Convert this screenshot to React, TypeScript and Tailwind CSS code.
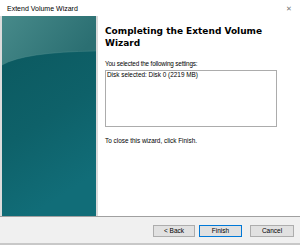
import React from "react";

function TealPanel() {
  return (
    <div className="w-[94px] h-full shrink-0">
      <svg width="94" height="200" viewBox="0 0 94 200" className="block">
        <defs>
          <linearGradient id="dark" x1="0" y1="0" x2="0.3" y2="1">
            <stop offset="0" stopColor="#0b575d" />
            <stop offset="0.6" stopColor="#0e6169" />
            <stop offset="1" stopColor="#116d78" />
          </linearGradient>
          <linearGradient id="light" x1="0" y1="0" x2="1" y2="0.4">
            <stop offset="0" stopColor="#478a8a" />
            <stop offset="1" stopColor="#2b6f72" />
          </linearGradient>
        </defs>
        <rect x="0" y="0" width="94" height="200" fill="url(#dark)" />
        <path d="M0 49 Q 22 36 94 35 V0 H0 Z" fill="url(#light)" />
        <path d="M0 49 Q 22 36 94 35" stroke="#5a9696" strokeOpacity="0.35" strokeWidth="1" fill="none" />
      </svg>
    </div>
  );
}

function Btn({ label, primary, w }: { label: string; primary?: boolean; w: string }) {
  return (
    <div
      className={
        "h-[12px] flex items-center justify-center bg-[#e1e1e1] text-[6.5px] text-black border " +
        (primary ? "border-[#0078d7] " : "border-[#adadad] ") +
        w
      }
    >
      {label}
    </div>
  );
}

export default function App() {
  return (
    <div
      className="w-[300px] h-[245px] bg-white flex flex-col overflow-hidden text-black"
      style={{ fontFamily: '"Liberation Sans", Arial, sans-serif' }}
    >
      <div className="h-[16px] flex items-center justify-between pl-[7px] pr-[8px] shrink-0">
        <span className="text-[7px] leading-none">Extend Volume Wizard</span>
        <span className="text-[7px] leading-none text-[#777]">✕</span>
      </div>
      <div className="h-[200px] flex shrink-0">
        <div className="w-[2px] h-full bg-[#dcdcdc] shrink-0" />
        <TealPanel />
        <div className="w-[2px] h-full bg-[#dadada] shrink-0" />
        <div className="flex-1 pl-[7px] flex flex-col">
          <div
            className="mt-[8.5px] text-[9px] leading-[12px] font-bold"
            style={{ fontFamily: '"DejaVu Sans", Verdana, sans-serif' }}
          >
            Completing the Extend Volume
            <br />
            Wizard
          </div>
          <div className="mt-[11.5px] text-[6.3px] leading-[8px] tracking-[-0.15px]">
            You selected the following settings:
          </div>
          <div className="mt-[2px] w-[172px] h-[57px] border border-[#acacac] pl-[1px] text-[6.4px] leading-[8px]">
            Disk selected: Disk 0 (2219 MB)
          </div>
          <div className="mt-[10px] text-[6.4px] leading-[8px]">To close this wizard, click Finish.</div>
        </div>
      </div>
      <div className="h-[1px] bg-[#a0a0a0] shrink-0" />
      <div className="h-[26px] bg-[#f0f0f0] flex items-start justify-end pt-[8px] pr-[6px] shrink-0">
        <Btn label="< Back" w="w-[42px]" />
        <div className="w-[4px]" />
        <Btn label="Finish" primary w="w-[43px]" />
        <div className="w-[8px]" />
        <Btn label="Cancel" w="w-[44px]" />
      </div>
      <div className="h-[2px] bg-[#c8c8c8] shrink-0" />
    </div>
  );
}
